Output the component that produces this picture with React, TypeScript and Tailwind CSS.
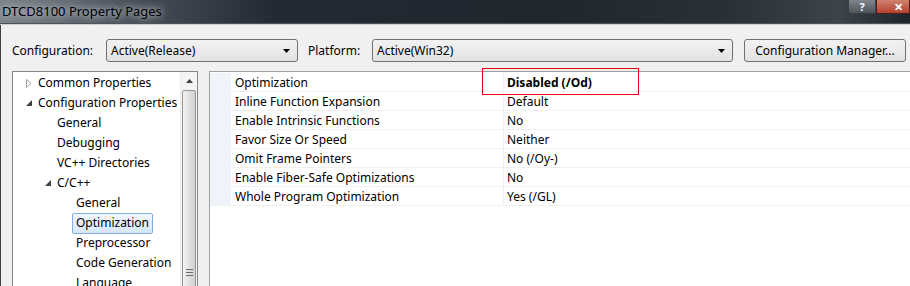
import React from "react";

const font = { fontFamily: '"Noto Sans", "Segoe UI", sans-serif' };

function Combo({ text, w }: { text: string; w: string }) {
  return (
    <div
      className={`${w} h-[23px] flex items-center justify-between rounded-[3px] border border-[#707070] bg-gradient-to-b from-[#f2f2f2] to-[#e3e3e3] pl-[4px] pr-[7px] text-[12px] text-black`}
    >
      <span className="pt-px">{text}</span>
      <svg width="7" height="4" viewBox="0 0 7 4">
        <path d="M0 0h7L3.5 4z" fill="#000" />
      </svg>
    </div>
  );
}

function Tri({ open }: { open: boolean }) {
  return open ? (
    <svg width="6" height="6" viewBox="0 0 6 6" className="shrink-0">
      <path d="M6 0V6H0z" fill="#404040" />
    </svg>
  ) : (
    <svg width="6" height="9" viewBox="0 0 6 9" className="shrink-0">
      <path d="M0.5 0.5L5 4.5L0.5 8.5z" fill="none" stroke="#a0a0a0" />
    </svg>
  );
}

type Item = { t: string; lvl: number; tri?: "open" | "closed"; sel?: boolean };
const tree: Item[] = [
  { t: "Common Properties", lvl: 0, tri: "closed" },
  { t: "Configuration Properties", lvl: 0, tri: "open" },
  { t: "General", lvl: 1 },
  { t: "Debugging", lvl: 1 },
  { t: "VC++ Directories", lvl: 1 },
  { t: "C/C++", lvl: 1, tri: "open" },
  { t: "General", lvl: 2 },
  { t: "Optimization", lvl: 2, sel: true },
  { t: "Preprocessor", lvl: 2 },
  { t: "Code Generation", lvl: 2 },
  { t: "Language", lvl: 2 },
];

const props: [string, string, boolean?][] = [
  ["Optimization", "Disabled (/Od)", true],
  ["Inline Function Expansion", "Default"],
  ["Enable Intrinsic Functions", "No"],
  ["Favor Size Or Speed", "Neither"],
  ["Omit Frame Pointers", "No (/Oy-)"],
  ["Enable Fiber-Safe Optimizations", "No"],
  ["Whole Program Optimization", "Yes (/GL)"],
];

export default function App() {
  return (
    <div
      className="w-[910px] h-[286px] overflow-hidden flex flex-col bg-[#f0f0f0] text-black"
      style={font}
    >
      {/* title bar */}
      <div className="relative h-[23px] shrink-0 bg-[linear-gradient(90deg,#7d848c_0%,#4a525b_14%,#232a33_30%,#1f262e_60%,#2a3038_80%,#3c434b_92%,#1e242b_100%)] flex items-center">
        <span className="ml-[2px] text-[13px] text-black [text-shadow:0_0_6px_#c8ccd0,0_0_10px_#b8bcc0]">
          DTCD8100 Property Pages
        </span>
        <div className="absolute right-[34px] top-0 w-[28px] h-[14px] rounded-bl-[3px] border border-t-0 border-[#3a3f46] bg-gradient-to-b from-[#7f868e] to-[#4d545c] flex items-center justify-center text-[11px] font-bold leading-none text-white">
          ?
        </div>
        <div className="absolute right-0 top-0 w-[34px] h-[14px] border border-t-0 border-[#4a1d18] bg-gradient-to-b from-[#d0806f] to-[#b3402c] flex items-center justify-center text-[11px] font-bold leading-none text-white pl-[10px]">
          ✕
        </div>
      </div>
      <div className="h-px shrink-0 bg-[#4d5257]" />
      <div className="h-px shrink-0 bg-[#c9cbcd]" />

      <div className="flex-1 flex flex-col border-l border-[#3b3f44]">
        {/* toolbar */}
        <div className="mt-[14px] flex items-center text-[12px]">
          <span className="ml-[11px] w-[94px] pt-px">Configuration:</span>
          <Combo text="Active(Release)" w="w-[192px]" />
          <span className="ml-[10px] w-[64px] pt-px">Platform:</span>
          <Combo text="Active(Win32)" w="w-[361px]" />
          <div className="ml-[11px] w-[162px] h-[23px] pt-px rounded-[3px] border border-[#707070] bg-gradient-to-b from-[#f2f2f2] to-[#e3e3e3] flex items-center justify-center">
            Configuration Manager...
          </div>
        </div>

        {/* panels */}
        <div className="mt-[9px] flex flex-1 min-h-0">
          {/* tree */}
          <div className="ml-[11px] w-[186px] border border-b-0 border-[#828790] bg-white flex text-[12px]">
            <div className="flex-1 min-w-0 overflow-hidden pt-px">
              {tree.map((it, i) => (
                <div key={i} className="h-[20px] flex items-center whitespace-nowrap">
                  <div
                    className="flex items-center justify-center w-[19px] shrink-0"
                    style={{ marginLeft: 6 + it.lvl * 19 }}
                  >
                    {it.tri ? <Tri open={it.tri === "open"} /> : null}
                  </div>
                  <span
                    className={
                      it.sel
                        ? "-ml-[4px] px-[3px] h-[21px] flex items-center rounded-[2px] border border-[#84acdd] bg-gradient-to-b from-[#f1f7fe] to-[#d5e7fc]"
                        : ""
                    }
                  >
                    {it.t}
                  </span>
                </div>
              ))}
            </div>
            {/* scrollbar */}
            <div className="w-[17px] shrink-0 bg-[#f4f4f4] flex flex-col border-l border-[#ececec]">
              <div className="h-[18px] flex items-center justify-center">
                <svg width="7" height="4" viewBox="0 0 7 4">
                  <path d="M0 4h7L3.5 0z" fill="#404040" />
                </svg>
              </div>
              <div className="flex-1 mx-[1px] -mb-[6px] rounded-[2px] border border-[#959595] bg-[linear-gradient(90deg,#f2f2f2,#e2e2e2_50%,#cfcfcf)] flex flex-col items-center justify-end pb-[22px]">
                <div className="flex flex-col gap-[2px]">
                  <div className="w-[7px] h-px bg-[#6a6a6a]" />
                  <div className="w-[7px] h-px bg-[#6a6a6a]" />
                  <div className="w-[7px] h-px bg-[#6a6a6a]" />
                </div>
              </div>
            </div>
          </div>

          {/* property grid */}
          <div className="relative ml-[11px] flex-1 border-l border-t border-[#a0a0a0] bg-white text-[12px] pt-px">
            {props.map(([n, v, b], i) => (
              <div key={i} className="flex h-[19px]">
                <div className="w-[21px] shrink-0 bg-[#f0f4fa]" />
                <div className="flex flex-1 border-b border-[#f0f0f0]">
                  <div className="w-[273px] shrink-0 pl-[4px] pt-[2px] flex items-center border-r border-[#f0f0f0]">
                    {n}
                  </div>
                  <div className={`pl-[3px] pt-[2px] flex items-center ${b ? "font-bold" : ""}`}>{v}</div>
                </div>
              </div>
            ))}
            <div className="absolute left-[272px] top-[-4px] w-[157px] h-[27px] border border-[#e8000b]" />
          </div>
        </div>
      </div>
    </div>
  );
}
